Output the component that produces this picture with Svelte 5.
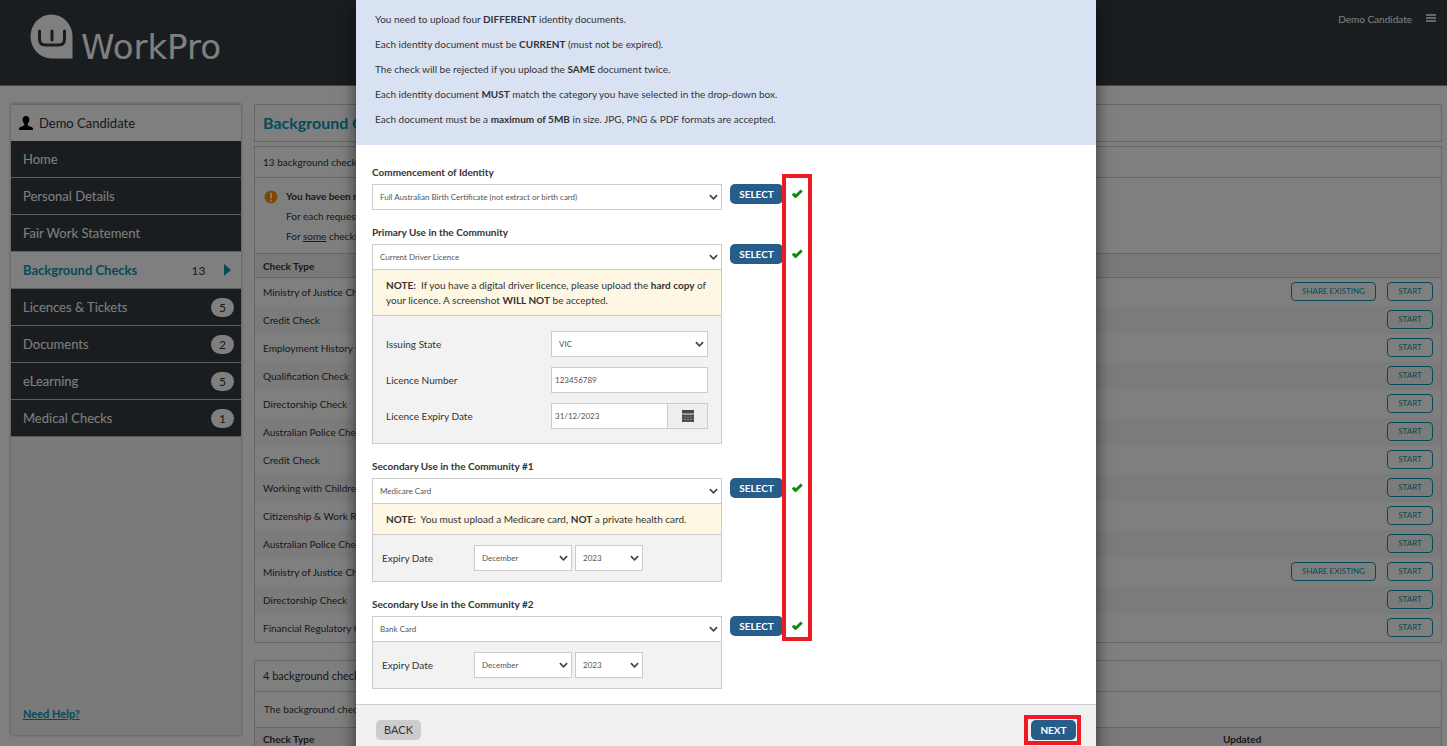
<script>
  const nav = [
    { label: 'Home' },
    { label: 'Personal Details' },
    { label: 'Fair Work Statement' },
    { label: 'Background Checks', count: 13, active: true },
    { label: 'Licences & Tickets', count: 5 },
    { label: 'Documents', count: 2 },
    { label: 'eLearning', count: 5 },
    { label: 'Medical Checks', count: 1 }
  ];

  const checks = [
    { name: 'Ministry of Justice Check', share: true },
    { name: 'Credit Check' },
    { name: 'Employment History Check' },
    { name: 'Qualification Check' },
    { name: 'Directorship Check' },
    { name: 'Australian Police Check' },
    { name: 'Credit Check' },
    { name: 'Working with Children Check' },
    { name: 'Citizenship & Work Rights Check' },
    { name: 'Australian Police Check' },
    { name: 'Ministry of Justice Check', share: true },
    { name: 'Directorship Check' },
    { name: 'Financial Regulatory Check' }
  ];
</script>

{#snippet upload()}
  <button class="btn primary" type="button">SELECT</button>
  <svg class="tick" viewBox="0 0 12 10" role="img" aria-label="Uploaded">
    <path d="M1 5.600 3 4l1.800 1.600L9.800.8l1.600 1.600-6.400 6.400H4z" fill="#0a8a0a" stroke="#0a8a0a" stroke-width=".6" stroke-linejoin="round" />
  </svg>
{/snippet}

{#snippet expiry(id)}
  <div class="box expiry">
    <label for="{id}-month">Expiry Date</label>
    <select class="month" id="{id}-month"><option>December</option></select>
    <select class="year" aria-label="Expiry year"><option>2023</option></select>
  </div>
{/snippet}

<div class="app">
  <header class="top">
    <a class="logo" href="#home">
      <svg viewBox="0 0 43 45" width="43" height="45" aria-hidden="true">
        <path d="M42.500 22v22.500H21.500A21 22 0 1 1 42.500 22z" fill="#fff" />
        <path d="M9.500 17v8q0 6 6 6h13q6 0 6-6v-8M22 17v9" fill="none" stroke="#343a40" stroke-width="3" stroke-linecap="round" />
      </svg>
      <span>WorkPro</span>
    </a>
    <div class="user">
      <span>Demo Candidate</span>
      <button class="menu" type="button" aria-label="Menu">
        <svg viewBox="0 0 10 10" width="10" height="10"><path d="M0 1h10M0 4h10M0 7h10" stroke="#fff" stroke-width="1.500" /></svg>
      </button>
    </div>
  </header>

  <div class="columns">
    <aside>
      <div class="profile">
        <svg viewBox="0 0 14 14" width="14" height="14" aria-hidden="true">
          <path d="M7 0c2.200 0 3.400 1.500 3.400 3.600 0 1.800-.7 3.400-1.700 4.200v1.400c0 .8 5.300 1.400 5.300 3.300V14H0v-1.500c0-1.900 5.300-2.500 5.300-3.300V7.800C4.300 7 3.600 5.400 3.600 3.600 3.600 1.500 4.800 0 7 0z" />
        </svg>
        Demo Candidate
      </div>
      <nav>
        {#each nav as item}
          <a href="#nav" class:active={item.active}>
            <span>{item.label}</span>
            {#if item.count}<span class="count">{item.count}</span>{/if}
            {#if item.active}<svg viewBox="0 0 7 12" width="7" height="12" aria-hidden="true"><path d="M0 0l7 6-7 6z" fill="#0797b0" /></svg>{/if}
          </a>
        {/each}
      </nav>
      <a class="help" href="#help">Need Help?</a>
    </aside>

    <main>
      <h1 class="panel">Background Checks</h1>
      <section class="panel">
        <h2>13 background checks to complete</h2>
        <div class="notice">
          <svg viewBox="0 0 14 14" width="14" height="14" aria-hidden="true">
            <circle cx="7" cy="7" r="6.500" fill="#ff8c00" />
            <path d="M7 2.800v5.400M7 9.800v1.600" stroke="#fff" stroke-width="2" />
          </svg>
          <div>
            <p><b>You have been requested to complete</b></p>
            <p>For each requested check</p>
            <p>For <u>some</u> checks</p>
          </div>
        </div>
        <table>
          <thead><tr><th>Check Type</th><th></th></tr></thead>
          <tbody>
            {#each checks as check}
              <tr>
                <td>{check.name}</td>
                <td class="actions">
                  <div>
                    {#if check.share}<button class="outline share" type="button">SHARE EXISTING</button>{/if}
                    <button class="outline" type="button">START</button>
                  </div>
                </td>
              </tr>
            {/each}
          </tbody>
        </table>
      </section>
      <section class="panel last">
        <h2>4 background checks in progress</h2>
        <p class="intro">The background checks</p>
        <table>
          <thead><tr><th>Check Type</th><th class="updated">Updated</th></tr></thead>
        </table>
      </section>
    </main>
  </div>

  <div class="overlay">
    <div class="modal" role="dialog" aria-modal="true" aria-label="Identity documents">
      <div class="rules">
        <p>You need to upload four <b>DIFFERENT</b> identity documents.</p>
        <p>Each identity document must be <b>CURRENT</b> (must not be expired).</p>
        <p>The check will be rejected if you upload the <b>SAME</b> document twice.</p>
        <p>Each identity document <b>MUST</b> match the category you have selected in the drop-down box.</p>
        <p>Each document must be a <b>maximum of 5MB</b> in size. JPG, PNG &amp; PDF formats are accepted.</p>
      </div>

      <form>
        <div class="group">
          <label class="title" for="commencement">Commencement of Identity</label>
          <div class="line">
            <div class="card">
              <select id="commencement"><option>Full Australian Birth Certificate (not extract or birth card)</option></select>
            </div>
            {@render upload()}
          </div>
        </div>

        <div class="group">
          <label class="title" for="primary">Primary Use in the Community</label>
          <div class="line">
            <div class="card">
              <select id="primary"><option>Current Driver Licence</option></select>
              <p class="note"><b>NOTE:</b>&nbsp; If you have a digital driver licence, please upload the <b>hard copy</b> of your licence. A screenshot <b>WILL NOT</b> be accepted.</p>
              <div class="box licence">
                <label for="state">Issuing State</label>
                <select id="state"><option>VIC</option></select>
                <label for="number">Licence Number</label>
                <input id="number" type="text" value="123456789" />
                <label for="expires">Licence Expiry Date</label>
                <div class="date">
                  <input id="expires" type="text" value="31/12/2023" />
                  <button type="button" aria-label="Open calendar">
                    <svg viewBox="0 0 12 13" width="12" height="13">
                      <path d="M0 0h12v3.500H0zM0 4.500h12V12H0z" fill="#444" />
                      <path d="M0 7h12M0 9.500h12M3 4.500V12M6 4.500V12M9 4.500V12" stroke="#888" stroke-width=".5" />
                    </svg>
                  </button>
                </div>
              </div>
            </div>
            {@render upload()}
          </div>
        </div>

        <div class="group">
          <label class="title" for="secondary1">Secondary Use in the Community #1</label>
          <div class="line">
            <div class="card">
              <select id="secondary1"><option>Medicare Card</option></select>
              <p class="note"><b>NOTE:</b>&nbsp; You must upload a Medicare card, <b>NOT</b> a private health card.</p>
              {@render expiry('medicare')}
            </div>
            {@render upload()}
          </div>
        </div>

        <div class="group">
          <label class="title" for="secondary2">Secondary Use in the Community #2</label>
          <div class="line">
            <div class="card">
              <select id="secondary2"><option>Bank Card</option></select>
              {@render expiry('bank')}
            </div>
            {@render upload()}
          </div>
        </div>
        <div class="mark ticks"></div>
      </form>

      <footer>
        <button class="btn back" type="button">BACK</button>
        <div class="next">
          <button class="btn primary" type="button">NEXT</button>
          <div class="mark"></div>
        </div>
      </footer>
    </div>
  </div>
</div>

<style>
  :global(body) { margin: 0; overflow: hidden; }
  .app, .app :global(*) { box-sizing: border-box; }
  .app {
    position: relative;
    height: 100vh;
    overflow: hidden;
    font: 10px/14px Lato, sans-serif;
    color: #333;
    background: #fff;
  }
  button, input, select { font-family: inherit; color: inherit; margin: 0; }
  p, h1, h2 { margin: 0; }
  a { color: inherit; text-decoration: none; }

  .top {
    display: flex;
    justify-content: space-between;
    align-items: flex-start;
    height: 86px;
    padding: 12px 11px 0 30px;
    background: #343a40;
    border-bottom: 1px solid #888;
    color: #fff;
  }
  .logo { display: flex; align-items: flex-end; gap: 8px; padding-top: 2px; }
  .logo span { font: 34px/24px "DejaVu Sans", sans-serif; }
  .user { display: flex; align-items: center; gap: 14px; }
  .menu { display: flex; padding: 0; border: 0; background: none; }

  .columns { display: flex; gap: 13px; padding: 18px 5px 0 11px; }
  aside {
    display: flex;
    flex-direction: column;
    flex: 0 0 230px;
    height: 631px;
    background: #f4f4f4;
    box-shadow: 0 0 3px #999;
  }
  .profile {
    display: flex;
    align-items: center;
    gap: 6px;
    height: 37px;
    padding: 0 8px;
    font-size: 13px;
    background: #fff;
    border-top: 1px solid #ccc;
    color: #333;
  }
  nav a {
    display: flex;
    align-items: center;
    height: 37px;
    padding: 0 7px 0 12px;
    font-size: 13px;
    color: #fff;
    background: #343a40;
    border-bottom: 1px solid #bbb;
  }
  nav a span:first-child { flex: 1; }
  .count {
    width: 23px;
    font-size: 12px;
    line-height: 19px;
    text-align: center;
    border-radius: 10px;
    background: #fff;
    color: #333;
  }
  nav a.active { padding-right: 10px; background: #fff; color: #0797b0; font-weight: 700; }
  .active .count { margin-right: 14px; font-weight: 400; }
  .help { margin: auto 0 14px 12px; font-size: 11px; font-weight: 700; color: #0797b0; text-decoration: underline; }

  main { flex: 1; min-width: 0; }
  .panel { border: 1px solid #ccc; background: #fff; }
  h1 { height: 38px; margin-bottom: 4px; padding: 0 8px; font-size: 16px; line-height: 36px; color: #0797b0; }
  h2 { height: 31px; padding: 0 8px; font-size: 10px; font-weight: 400; line-height: 30px; border-bottom: 1px solid #ccc; }
  .notice { display: flex; gap: 8px; height: 75px; padding: 12px 9px 0; }
  .notice p { line-height: 20px; }
  .notice > div { margin-top: -4px; }
  table { width: 100%; border-collapse: collapse; }
  th { height: 24px; padding: 0 8px; text-align: left; background: #f2f2f2; border: 1px solid #ccc; border-width: 1px 0; }
  td { height: 28px; padding: 0 8px; }
  tbody tr:nth-child(even) { background: #f6f6f6; }
  .actions div { display: flex; justify-content: flex-end; gap: 11px; }
  .outline {
    width: 46px;
    height: 19px;
    padding: 0;
    font-size: 8px;
    line-height: 17px;
    color: #0797b0;
    background: transparent;
    border: 1px solid #0797b0;
    border-radius: 4px;
  }
  .share { width: 85px; }
  .last { margin-top: 17px; }
  .last h2 { font-size: 11px; }
  .intro { padding: 0 9px; line-height: 35px; }
  .updated { width: 226px; }

  .overlay {
    position: absolute;
    inset: 0;
    padding-left: 5px;
    background: rgba(0, 0, 0, .5);
  }
  .modal {
    max-width: 740px;
    margin: 0 auto;
    background: #fff;
    box-shadow: 0 5px 15px rgba(0, 0, 0, .6);
  }
  .rules { padding: 7px 19px 13px; background: #d9e2f3; }
  .rules p { line-height: 25px; }

  form { position: relative; display: flex; flex-direction: column; gap: 12px; padding: 17px 16px 15px; }
  .title { display: block; margin-bottom: 2px; font-weight: 700; line-height: 20px; }
  .line { display: flex; align-items: flex-start; }
  .card { flex: 0 1 350px; margin-right: 8px; }
  select, input {
    display: block;
    width: 100%;
    height: 26px;
    padding: 0 7px;
    font-size: 8px;
    color: #555;
    background: #fff;
    border: 1px solid #ccc;
    border-radius: 0;
  }
  select {
    appearance: none;
    background: #fff url("data:image/svg+xml,%3Csvg xmlns='http://www.w3.org/2000/svg' viewBox='0 0 10 6'%3E%3Cpath d='M1 1l4 4 4-4' fill='none' stroke='%23444' stroke-width='1.900'/%3E%3C/svg%3E") no-repeat right 3px center / 9px 6px;
  }
  input { padding: 0 3px; }
  .note { padding: 8px 8px 7px 13px; background: #fdf7e3; border: 1px solid #ccc; border-top: 0; line-height: 15px; }
  .box { background: #f2f2f2; border: 1px solid #ccc; border-top: 0; }
  .licence { display: grid; grid-template-columns: 165px 1fr; row-gap: 10px; align-items: center; padding: 15px 13px 14px; }
  .date { display: flex; }
  .date button { flex: 0 0 40px; display: grid; place-items: center; padding: 0; border: 1px solid #ccc; border-left: 0; background: #eee; }
  .expiry { display: flex; align-items: center; padding: 10px 9px; }
  .expiry label { width: 92px; }
  .month { width: 98px; margin-right: 3px; }
  .year { width: 68px; }

  .btn { height: 20px; padding: 0; font-size: 10px; line-height: 20px; border: 0; border-radius: 5px; }
  .primary { width: 53px; font-weight: 700; color: #fff; background: #285c8a; }
  .tick { width: 12px; height: 10px; margin: 5px 0 0 8px; }
  .mark { position: absolute; border: 4px solid #ed1c24; pointer-events: none; }
  .ticks { top: 29px; bottom: 63px; left: 426px; width: 30px; }

  footer {
    display: flex;
    justify-content: space-between;
    padding: 15px 20px;
    background: #f0f0f0;
    border-top: 1px solid #ccc;
  }
  .back { width: 45px; font-size: 11px; background: #ccc; }
  .next { position: relative; }
  .next .primary { display: block; width: 45px; }
  .next .mark { inset: -5px -5px -5px -7px; }
</style>
